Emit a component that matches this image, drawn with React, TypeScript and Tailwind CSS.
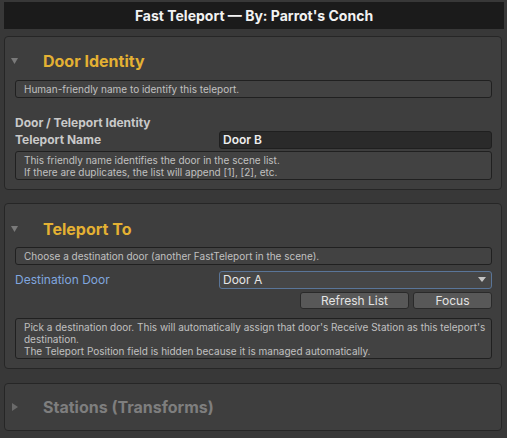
import type { ReactNode } from 'react'

const FONT = { fontFamily: 'Inter, "Noto Sans", "Liberation Sans", sans-serif' }

function Foldout({ open }: { open: boolean }) {
  return (
    <svg width="8" height="8" viewBox="0 0 8 8" className="shrink-0">
      {open ? <polygon points="0,1 7,1 3.5,7" fill="#7a7a7a" /> : <polygon points="1,0 7,4 1,8" fill="#6a6a6a" />}
    </svg>
  )
}

function HelpBox({ children, className = '' }: { children: ReactNode; className?: string }) {
  return (
    <div
      className={`whitespace-nowrap rounded-[3px] border border-[#202020] bg-[#424242] px-[8px] text-[10px] leading-[12px] text-[#c0c0c0] ${className}`}
    >
      {children}
    </div>
  )
}

function Section({ title, open, muted, children, className = '' }: { title: string; open: boolean; muted?: boolean; children?: ReactNode; className?: string }) {
  return (
    <div className={`rounded-[4px] border border-[#262626] bg-[#3e3e3e] pl-[10px] pr-[9px] ${className}`}>
      <div className="flex h-5 items-center">
        <div className="-ml-[4px] w-[32px]">
          <Foldout open={open} />
        </div>
        <span className={`text-[16px] font-bold ${muted ? 'text-[#7e7e7e]' : 'text-[#e4b133]'}`}>{title}</span>
      </div>
      {children}
    </div>
  )
}

export default function App() {
  return (
    <div className="h-[438px] w-[507px] overflow-hidden bg-[#383838] pt-[2px]" style={FONT}>
      {/* Inspector title bar */}
      <div className="ml-[4px] mr-[3px] flex h-[27px] items-center justify-center bg-[#1b1b1b] text-[14px] font-bold text-[#f2f2f2]">
        Fast Teleport — By: Parrot's Conch
      </div>

      <div className="ml-[4px] mr-[5px] mt-[7px]">
        <Section title="Door Identity" open className="pt-[14px] pb-[9px]">
          <HelpBox className="mt-[9px] flex h-[18px] items-center">Human-friendly name to identify this teleport.</HelpBox>
          <div className="mt-[17px] flex h-4 items-center text-[12px] font-bold text-[#c9c9c9]">Door / Teleport Identity</div>
          <div className="flex h-[18px] items-center">
            <span className="w-[204px] text-[12px] font-bold text-[#c9c9c9]">Teleport Name</span>
            <div className="flex h-[18px] flex-1 items-center rounded-[3px] border border-[#1f1f1f] bg-[#2a2a2a] px-[3px] text-[12px] font-semibold text-[#eeeeee]">
              Door B
            </div>
          </div>
          <HelpBox className="mt-[2px] pt-[2px] pb-[1px]">
            <div>This friendly name identifies the door in the scene list.</div>
            <div>If there are duplicates, the list will append [1], [2], etc.</div>
          </HelpBox>
        </Section>

        <Section title="Teleport To" open className="mt-[13px] pt-[15px] pb-[9px]">
          <HelpBox className="mt-[8px] flex h-[18px] items-center">Choose a destination door (another FastTeleport in the scene).</HelpBox>
          <div className="mt-[6px] flex h-[18px] items-center">
            <span className="w-[204px] text-[12px] text-[#80a6df]">Destination Door</span>
            <div className="flex h-[18px] flex-1 items-center justify-between rounded-[3px] border border-[#5a7598] bg-[#464646] pl-[3px] pr-[5px] text-[12px] text-[#e6e6e6]">
              <span>Door A</span>
              <svg width="8" height="6" viewBox="0 0 8 6">
                <polygon points="0,0 8,0 4,5" fill="#c4c4c4" />
              </svg>
            </div>
          </div>
          <div className="mt-[3px] flex justify-end gap-[4px]">
            <button className="h-[17px] w-[109px] rounded-[3px] border border-[#2a2a2a] bg-[#585858] text-[12px] leading-none text-[#e4e4e4]">Refresh List</button>
            <button className="h-[17px] w-[79px] rounded-[3px] border border-[#2a2a2a] bg-[#585858] text-[12px] leading-none text-[#e4e4e4]">Focus</button>
          </div>
          <HelpBox className="mt-[9px] pt-[2px] pb-[1px]">
            <div>Pick a destination door. This will automatically assign that door's Receive Station as this teleport's</div>
            <div>destination.</div>
            <div>The Teleport Position field is hidden because it is managed automatically.</div>
          </HelpBox>
        </Section>

        <Section title="Stations (Transforms)" open={false} muted className="mt-[14px] pt-[13px] pb-[13px]" />
      </div>
    </div>
  )
}
